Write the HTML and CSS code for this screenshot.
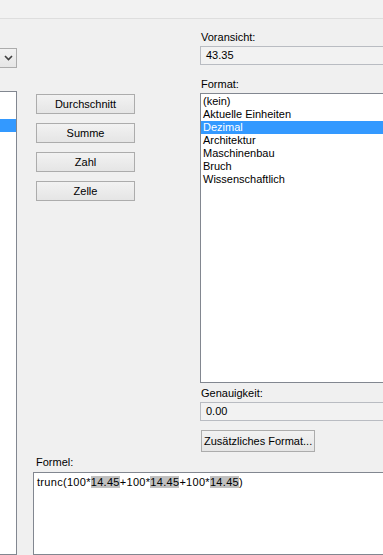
FILE: index.html
```html
<!DOCTYPE html>
<html lang="de">
<head>
  <meta charset="UTF-8">
  <title>Formel</title>
  <link rel="stylesheet" href="styles.css">
</head>
<body>

  <div class="topbar"></div>

  <div class="main">
    <!-- linke Spalte (abgeschnitten) -->
    <div class="side">
      <div class="dropdown">
        <svg width="9" height="6" viewBox="0 0 9 6"><path d="M1 1 L4.5 4.5 L8 1" fill="none" stroke="#404040" stroke-width="1.6"/></svg>
      </div>
      <div class="side-list">
        <div class="side-item"></div>
        <div class="side-item"></div>
        <div class="side-item selected"></div>
      </div>
    </div>

    <div class="content">
      <div class="upper">
        <div class="buttons">
          <button class="btn">Durchschnitt</button>
          <button class="btn">Summe</button>
          <button class="btn">Zahl</button>
          <button class="btn">Zelle</button>
        </div>

        <div class="right">
          <div class="label">Voransicht:</div>
          <div class="field">43.35</div>

          <div class="label format-label">Format:</div>
          <div class="listbox">
            <div class="item">(kein)</div>
            <div class="item">Aktuelle Einheiten</div>
            <div class="item selected">Dezimal</div>
            <div class="item">Architektur</div>
            <div class="item">Maschinenbau</div>
            <div class="item">Bruch</div>
            <div class="item">Wissenschaftlich</div>
          </div>

          <div class="label prec-label">Genauigkeit:</div>
          <div class="field">0.00</div>

          <button class="btn btn-extra">Zusätzliches Format...</button>
        </div>
      </div>

      <div class="formula">
        <div class="label formula-label">Formel:</div>
        <div class="editor">trunc(100*<span class="hl">14.45</span>+100*<span class="hl">14.45</span>+100*<span class="hl">14.45</span>)</div>
      </div>
    </div>
  </div>

</body>
</html>
```

FILE: styles.css
```css
html, body {
  margin: 0;
  padding: 0;
}

body {
  font-family: "Liberation Sans", Arial, sans-serif;
  font-size: 11px;
  color: #000;
  background: #f0f0f0;
  width: 383px;
  height: 555px;
  overflow: hidden;
}

.topbar {
  height: 18px;
  background: #f2f2f2;
  border-bottom: 1px solid #dedede;
}

.main {
  display: flex;
  height: 536px;
}

/* left column, mostly off screen */
.side {
  width: 17px;
  display: flex;
  flex-direction: column;
  flex-shrink: 0;
}

.dropdown {
  margin-top: 29px;
  height: 18px;
  border: 1px solid #acacac;
  border-left: none;
  background: linear-gradient(#f2f2f2, #e6e6e6);
  display: flex;
  align-items: center;
  justify-content: center;
}

.side-list {
  margin-top: 23px;
  flex: 1;
  background: #fff;
  border: 1px solid #828790;
  border-left: none;
  padding-top: 1px;
}

.side-item {
  height: 13px;
}

.side-item.selected {
  background: #3399ff;
}

.content {
  flex: 1;
  display: flex;
  flex-direction: column;
  min-width: 0;
}

.upper {
  display: flex;
}

.buttons {
  width: 99px;
  margin-left: 19px;
  padding-top: 75px;
  display: flex;
  flex-direction: column;
  gap: 9px;
  flex-shrink: 0;
}

.btn {
  font-family: "Liberation Sans", Arial, sans-serif;
  font-size: 11px;
  color: #000;
  height: 20px;
  padding: 0 4px;
  border: 1px solid #acacac;
  border-radius: 0;
  background: linear-gradient(#f2f2f2, #e5e5e5);
  text-align: center;
  white-space: nowrap;
}

.right {
  margin-left: 65px;
  width: 200px;
  flex-shrink: 0;
  padding-top: 12px;
  display: flex;
  flex-direction: column;
  align-items: flex-start;
}

.label {
  line-height: 13px;
  height: 13px;
  padding-left: 1px;
}

.field {
  margin-top: 2px;
  align-self: stretch;
  height: 17px;
  line-height: 17px;
  padding-left: 5px;
  border: 1px solid #b9bcc2;
  background: #f2f2f2;
}

.format-label {
  margin-top: 13px;
}

.listbox {
  margin-top: 2px;
  align-self: stretch;
  height: 287px;
  background: #fff;
  border: 1px solid #828790;
  padding-top: 1px;
}

.item {
  height: 13px;
  line-height: 13px;
  padding-left: 2px;
}

.item.selected {
  background: #3399ff;
  color: #fff;
}

.prec-label {
  margin-top: 4px;
}

.btn-extra {
  margin-top: 9px;
  margin-left: 1px;
  height: 22px;
  width: 114px;
  padding: 0 2px;
}

.formula {
  display: flex;
  flex-direction: column;
  margin-top: 4px;
  flex: 1;
}

.formula-label {
  margin-left: 18px;
}

.editor {
  margin-top: 3px;
  margin-left: 16px;
  flex: 1;
  background: #fff;
  border: 1px solid #828790;
  border-right: none;
  padding: 2px 3px;
  line-height: 15px;
  letter-spacing: 0.3px;
  white-space: nowrap;
}

.hl {
  background: #c0c0c0;
}
```
